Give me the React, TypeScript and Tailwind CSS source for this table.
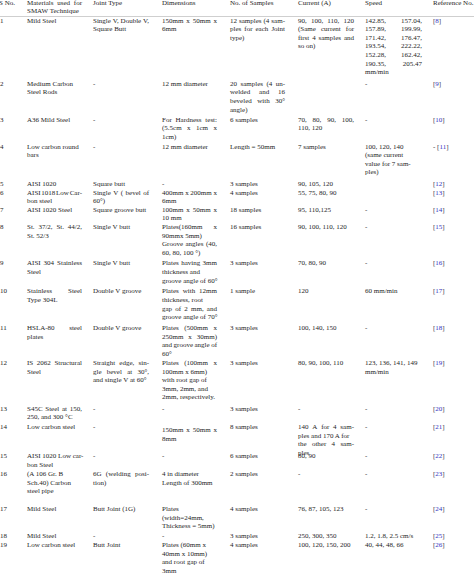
type Row = {
  n: string;
  cells: string[][];
  pad: string;
};

// column classes: padding-right gives each column its text width
const colPad = [
  "",
  "pr-[11px]",
  "pr-[13px]",
  "pr-[13px]",
  "pr-[13px]",
  "pr-[11px]",
  "pr-[11px]",
  "",
];

const header: string[][] = [
  ["~Materials used for", "SMAW Technique"],
  ["Joint Type"],
  ["Dimensions"],
  ["No. of Samples"],
  ["Current (A)"],
  ["Speed"],
  ["Reference No."],
];

const rows: Row[] = [
  {
    n: "1",
    pad: "pt-0",
    cells: [
      ["Mild Steel"],
      ["~Single V, Double V,", "Square Butt"],
      ["~150mm x 50mm x", "6mm"],
      ["~12 samples (4 sam-", "~ples for each Joint", "type)"],
      ["~90, 100, 110, 120", "~(Same current for", "~first 4 samples and", "so on)"],
      [
        "~142.85, 157.04,",
        "~157.89, 199.99,",
        "~171.42, 176.47,",
        "~193.54, 222.22,",
        "~152.28, 162.42,",
        "~190.35, 205.47",
        "mm/min",
      ],
      ["[8]"],
    ],
  },
  {
    n: "2",
    pad: "pt-[3px]",
    cells: [
      ["Medium Carbon", "Steel Rods"],
      ["-"],
      ["12 mm diameter"],
      ["~20 samples (4 un-", "~welded and 16", "~beveled with 30°", "angle)"],
      [],
      ["-"],
      ["[9]"],
    ],
  },
  {
    n: "3",
    pad: "pt-[1.6px]",
    cells: [
      ["A36 Mild Steel"],
      ["-"],
      ["~For Hardness test:", "~(5.5cm x 1cm x", "1cm)"],
      ["6 samples"],
      ["~70, 80, 90, 100,", "110, 120"],
      ["-"],
      ["[10]"],
    ],
  },
  {
    n: "4",
    pad: "pt-[1px]",
    cells: [
      ["Low carbon round", "bars"],
      ["-"],
      ["12 mm diameter"],
      ["Length = 50mm"],
      ["7 samples"],
      ["100, 120, 140", "(same current", "value for 7 sam-", "ples)"],
      ["- [11]"],
    ],
  },
  {
    n: "5",
    pad: "pt-[3px]",
    cells: [["AISI 1020"], ["Square butt"], ["-"], ["3 samples"], ["90, 105, 120"], [], ["[12]"]],
  },
  {
    n: "6",
    pad: "pt-0",
    cells: [
      ["~AISI 1018 Low Car-", "bon steel"],
      ["~Single V ( bevel of", "60°)"],
      ["~400mm x 200mm x", "6mm"],
      ["4 samples"],
      ["55, 75, 80, 90"],
      [],
      ["[13]"],
    ],
  },
  {
    n: "7",
    pad: "pt-0",
    cells: [
      ["AISI 1020 Steel"],
      ["Square groove butt"],
      ["~100mm x 50mm x", "10 mm"],
      ["18 samples"],
      ["95, 110,125"],
      ["-"],
      ["[14]"],
    ],
  },
  {
    n: "8",
    pad: "pt-0",
    cells: [
      ["~St. 37/2, St. 44/2,", "St. 52/3"],
      ["Single V butt"],
      ["~Plates(160mm x", "90mmx 5mm)", "~Groove angles (40,", "60, 80, 100 °)"],
      ["16 samples"],
      ["90, 100, 110, 120"],
      ["-"],
      ["[15]"],
    ],
  },
  {
    n: "9",
    pad: "pt-[2px]",
    cells: [
      ["~AISI 304 Stainless", "Steel"],
      ["Single V butt"],
      ["~Plates having 3mm", "thickness and", "groove angle of 60°"],
      ["3 samples"],
      ["70, 80, 90"],
      ["-"],
      ["[16]"],
    ],
  },
  {
    n: "10",
    pad: "pt-[2.3px]",
    cells: [
      ["~Stainless Steel", "Type 304L"],
      ["Double V groove"],
      ["~Plates with 12mm", "thickness, root", "~gap of 2 mm, and", "groove angle of 70°"],
      ["1 sample"],
      ["120"],
      ["60 mm/min"],
      ["[17]"],
    ],
  },
  {
    n: "11",
    pad: "pt-[2.3px]",
    cells: [
      ["~HSLA-80 steel", "plates"],
      ["Double V groove"],
      ["~Plates (500mm x", "~250mm x 30mm)", "~and groove angle of", "60°"],
      ["3 samples"],
      ["100, 140, 150"],
      ["-"],
      ["[18]"],
    ],
  },
  {
    n: "12",
    pad: "pt-[0.6px]",
    cells: [
      ["~IS 2062 Structural", "Steel"],
      ["~Straight edge, sin-", "~gle bevel at 30°,", "and single V at 60°"],
      ["~Plates (100mm x", "100mm x 6mm)", "with root gap of", "3mm, 2mm, and", "2mm, respectively."],
      ["3 samples"],
      ["80, 90, 100, 110"],
      ["123, 136, 141, 149", "mm/min"],
      ["[19]"],
    ],
  },
  {
    n: "13",
    pad: "pt-[2.8px]",
    cells: [
      ["~S45C Steel at 150,", "250, and 300 °C"],
      ["-"],
      ["-"],
      ["3 samples"],
      ["-"],
      ["-"],
      ["[20]"],
    ],
  },
  {
    n: "14",
    pad: "pt-[1.3px] h-[30.3px]",
    cells: [
      ["Low carbon steel"],
      ["-"],
      ["~150mm x 50mm x", "8mm"],
      ["8 samples"],
      ["~140 A for 4 sam-", "ples and 170 A for", "~the other 4 sam-", "ples"],
      ["-"],
      ["[21]"],
    ],
  },
  {
    n: "15",
    pad: "pt-0",
    cells: [
      ["AISI 1020 Low car-", "bon Steel"],
      ["-"],
      ["-"],
      ["6 samples"],
      ["80, 90"],
      ["-"],
      ["[22]"],
    ],
  },
  {
    n: "16",
    pad: "pt-[0.8px]",
    cells: [
      ["(A 106 Gr. B", "Sch.40) Carbon", "steel pipe"],
      ["~6G (welding posi-", "tion)"],
      ["4 in diameter", "Length of 300mm"],
      ["2 samples"],
      ["-"],
      ["-"],
      ["[23]"],
    ],
  },
  {
    n: "17",
    pad: "pt-[9.2px]",
    cells: [
      ["Mild Steel"],
      ["Butt Joint (1G)"],
      ["Plates", "(width=24mm,", "Thickness = 5mm)"],
      ["4 samples"],
      ["76, 87, 105, 123"],
      ["-"],
      ["[24]"],
    ],
  },
  {
    n: "18",
    pad: "pt-[1.2px]",
    cells: [["Mild Steel"], ["-"], ["-"], ["3 samples"], ["250, 300, 350"], ["1.2, 1.8, 2.5 cm/s"], ["[25]"]],
  },
  {
    n: "19",
    pad: "pt-[0.4px]",
    cells: [
      ["Low carbon steel"],
      ["Butt Joint"],
      ["Plates (60mm x", "40mm x 10mm)", "and root gap of", "3mm"],
      ["4 samples"],
      ["100, 120, 150, 200"],
      ["40, 44, 48, 66"],
      ["[26]"],
    ],
  },
];

function Line({ t }: { t: string }) {
  // "~" marks a line that is justified to the column width
  if (t.startsWith("~")) {
    const words = t.slice(1).split(" ");
    return (
      <div className="flex justify-between whitespace-nowrap">
        {words.map((w, i) => (
          <span key={i}>{w}</span>
        ))}
      </div>
    );
  }
  return <div className="whitespace-nowrap">{t}</div>;
}

function RefCell({ t }: { t: string }) {
  const m = t.match(/^(.*)\[(\d+)\]$/);
  if (!m) return <div className="whitespace-nowrap">{t}</div>;
  return (
    <div className="whitespace-nowrap">
      {m[1]}
      <span className="text-[#33334a]">[</span>
      <span className="text-[#3434c4]">{m[2]}</span>
      <span className="text-[#33334a]">]</span>
    </div>
  );
}

const grid = "grid grid-cols-[27px_66px_69px_68px_68px_67px_68px_41px]";

export default function App() {
  return (
    <div className="h-[577px] w-[474px] overflow-hidden bg-white font-['Liberation_Serif',serif] text-[7px] leading-[8.6px] text-[#1e1e1e]">
      {/* header */}
      <div className={`${grid} -mt-[1.5px] border-b border-[#cfcfcf]`}>
        <div className="-ml-[1px] whitespace-nowrap">S No.</div>
        {header.map((lines, i) => (
          <div key={i} className={colPad[i + 1]}>
            {lines.map((l, j) => (
              <Line key={j} t={l} />
            ))}
          </div>
        ))}
      </div>

      {/* body */}
      {rows.map((r) => (
        <div key={r.n} className={`${grid} ${r.pad}`}>
          <div className="whitespace-nowrap">{r.n}</div>
          {r.cells.map((lines, i) =>
            i === 6 ? (
              <div key={i}>
                {lines.map((l, j) => (
                  <RefCell key={j} t={l} />
                ))}
              </div>
            ) : (
              <div
                key={i}
                className={`${colPad[i + 1]} ${r.n === "14" && i === 2 ? "pt-[3px]" : ""}`}
              >
                {lines.map((l, j) => (
                  <Line key={j} t={l} />
                ))}
              </div>
            )
          )}
        </div>
      ))}
    </div>
  );
}
